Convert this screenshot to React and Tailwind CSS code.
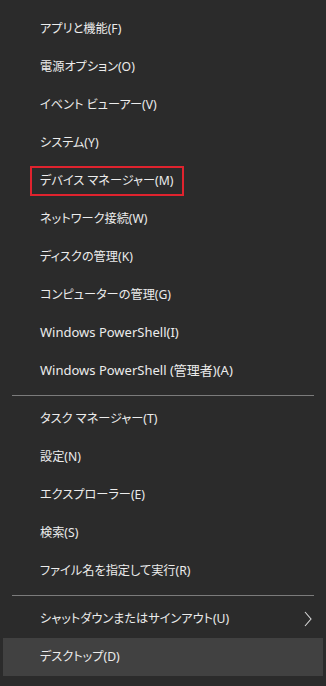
import React from "react";

// Win+X クイックリンクメニュー
const groups = [
  [
    "アプリと機能(F)",
    "電源オプション(O)",
    "イベント ビューアー(V)",
    "システム(Y)",
    "デバイス マネージャー(M)",
    "ネットワーク接続(W)",
    "ディスクの管理(K)",
    "コンピューターの管理(G)",
    "Windows PowerShell(I)",
    "Windows PowerShell (管理者)(A)",
  ],
  ["タスク マネージャー(T)", "設定(N)", "エクスプローラー(E)", "検索(S)", "ファイル名を指定して実行(R)"],
  ["シャットダウンまたはサインアウト(U)", "デスクトップ(D)"],
];

const MARKED = "デバイス マネージャー(M)";
const SUBMENU = "シャットダウンまたはサインアウト(U)";
const HOVER = "デスクトップ(D)";

function Item({ label }) {
  const hovered = label === HOVER;
  // kana in the original font are narrower than Noto's, latin is not
  const size = label.startsWith("Windows") ? "text-[13px]" : "text-[12.2px]";
  return (
    <div className="px-[3px]">
      <div
        className={`flex h-[38px] items-center pl-[37px] pr-[11px] ${size} ${hovered ? "bg-[#414141]" : ""}`}
      >
        {label === MARKED ? (
          <span className="-ml-[10px] flex h-[30px] items-center border-2 border-[#e0232e] pl-[8px] pr-[9px]">
            {label}
          </span>
        ) : (
          <span>{label}</span>
        )}
        {label === SUBMENU && (
          <svg className="ml-auto" width="8" height="16" viewBox="0 0 8 16" fill="none">
            <path d="M1 1 L7 8 L1 15" stroke="#d8d8d8" strokeWidth="1.1" />
          </svg>
        )}
      </div>
    </div>
  );
}

export default function App() {
  return (
    <div
      className="h-[686px] w-[326px] overflow-hidden bg-[#2b2b2b] pt-[10px] text-[#ececec] [font-feature-settings:'palt']"
      style={{ fontFamily: '"Noto Sans", "Noto Sans CJK JP", sans-serif' }}
    >
      {groups.map((g, gi) => (
        <div key={gi}>
          {gi > 0 && (
            <div className="flex h-[10px] items-center px-[12px]">
              <div className="h-px w-full bg-[#7b7b7b]" />
            </div>
          )}
          {g.map((label) => (
            <Item key={label} label={label} />
          ))}
        </div>
      ))}
    </div>
  );
}
